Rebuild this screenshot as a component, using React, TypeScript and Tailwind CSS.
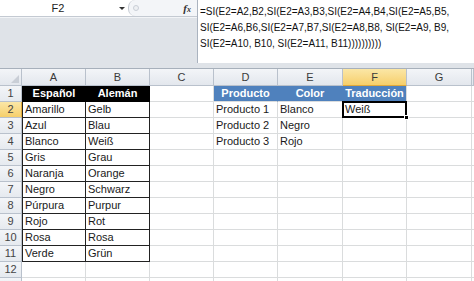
import React from 'react';

const cols = ['A', 'B', 'C', 'D', 'E', 'F', 'G', ''];
const widths = ['w-[64px]', 'w-[64px]', 'w-[64px]', 'w-[64px]', 'w-[65px]', 'w-[64px]', 'w-[65px]', 'flex-1'];

const colores: [string, string][] = [
  ['Amarillo', 'Gelb'],
  ['Azul', 'Blau'],
  ['Blanco', 'Weiß'],
  ['Gris', 'Grau'],
  ['Naranja', 'Orange'],
  ['Negro', 'Schwarz'],
  ['Púrpura', 'Purpur'],
  ['Rojo', 'Rot'],
  ['Rosa', 'Rosa'],
  ['Verde', 'Grün'],
];

const productos: [string, string][] = [
  ['Producto 1', 'Blanco'],
  ['Producto 2', 'Negro'],
  ['Producto 3', 'Rojo'],
];

function Cell({ w, children, className = '' }: { w: string; children?: React.ReactNode; className?: string }) {
  return (
    <div className={`${w} h-full shrink-0 border-r border-b border-[#dadcdd] px-[2px] flex items-center whitespace-nowrap overflow-hidden ${className}`}>
      {children}
    </div>
  );
}

export default function App() {
  const rows = Array.from({ length: 13 }, (_, i) => i + 1);

  return (
    <div className="w-[474px] h-[281px] overflow-hidden bg-white text-[11px] text-[#1a1a1a] font-['Liberation_Sans',Arial,sans-serif]">
      {/* Formula bar */}
      <div className="flex h-[63px]">
        <div className="w-[197px] flex flex-col bg-[#dfe3e8]">
          <div className="h-[17px] flex bg-white border-b border-[#c4cad2]">
            <div className="w-[116px] flex items-center justify-center text-[#222]">F2</div>
            <div className="w-[12px] flex items-center justify-center">
              <span className="border-l-[3px] border-r-[3px] border-t-[3px] border-l-transparent border-r-transparent border-t-[#333]" />
            </div>
            <div className="flex-1 flex items-center bg-[#f3f5f8] border-l border-[#c4cad2] rounded-l-[7px] pl-[4px]">
              <span className="w-[6px] h-[6px] rounded-full border border-[#c9ced6] bg-[#eef0f3]" />
              <span className="ml-auto mr-[6px] italic font-bold text-[11px] text-[#333] font-['Liberation_Serif',serif]">
                f<span className="text-[8px]">x</span>
              </span>
            </div>
          </div>
          <div className="flex-1 border-t border-[#f2f4f7]" />
        </div>
        <div className="flex-1 bg-white border-l border-[#aab3bf] pl-[2px] pt-[4px] text-[10px] leading-[16px] text-[#111]">
          <div>=SI(E2=A2,B2,SI(E2=A3,B3,SI(E2=A4,B4,SI(E2=A5,B5,</div>
          <div>SI(E2=A6,B6,SI(E2=A7,B7,SI(E2=A8,B8, SI(E2=A9, B9,</div>
          <div>SI(E2=A10, B10, SI(E2=A11, B11))))))))))</div>
        </div>
      </div>
      <div className="h-[6px] bg-[#dfe3e8] border-b border-[#a7b0bb]" />

      {/* Column headers */}
      <div className="flex h-[17px] bg-[#eceff3] text-[#3a3a3a]">
        <div className="w-[22px] shrink-0 border-r border-b border-[#b9c1cc] bg-gradient-to-b from-[#f3f5f8] to-[#e3e7ed] flex items-end justify-end p-[2px]">
          <span className="w-0 h-0 border-l-[8px] border-b-[8px] border-l-transparent border-b-[#c9ced6]" />
        </div>
        {cols.map((c, i) => (
          <div
            key={i}
            className={`${widths[i]} shrink-0 border-r border-b border-[#b9c1cc] flex items-center justify-center ${c === 'F' ? 'bg-gradient-to-b from-[#fbe7a6] to-[#f6cf6a] border-b-[#e1a93a]' : 'bg-gradient-to-b from-[#f3f5f8] to-[#e3e7ed]'}`}
          >
            {c}
          </div>
        ))}
      </div>

      {/* Rows */}
      {rows.map((r) => {
        const color = r >= 2 && r <= 11 ? colores[r - 2] : null;
        const prod = r >= 2 && r <= 4 ? productos[r - 2] : null;
        return (
          <div key={r} className="flex h-[16px]">
            <div
              className={`w-[22px] shrink-0 border-r border-b border-[#b9c1cc] flex items-center justify-center text-[#444] ${r === 2 ? 'bg-gradient-to-b from-[#fbe7a6] to-[#f6cf6a] border-r-[#e1a93a]' : 'bg-gradient-to-b from-[#f3f5f8] to-[#e6eaef]'}`}
            >
              {r <= 12 ? r : ''}
            </div>
            {/* A */}
            {r === 1 ? (
              <Cell w="w-[64px]" className="bg-black text-white font-bold justify-center border-l border-l-black border-r-black border-b-black">Español</Cell>
            ) : color ? (
              <Cell w="w-[64px]" className="border-l border-l-[#222] border-r-[#222] border-b-[#222]">{color[0]}</Cell>
            ) : (
              <Cell w="w-[64px]" />
            )}
            {/* B */}
            {r === 1 ? (
              <Cell w="w-[64px]" className="bg-black text-white font-bold justify-center border-r-black border-b-black">Alemán</Cell>
            ) : color ? (
              <Cell w="w-[64px]" className="border-r-[#222] border-b-[#222]">{color[1]}</Cell>
            ) : (
              <Cell w="w-[64px]" />
            )}
            {/* C */}
            <Cell w="w-[64px]" />
            {/* D, E, F */}
            {r === 1 ? (
              <>
                <Cell w="w-[64px]" className="bg-[#4f81bd] text-white font-bold justify-center border-r-[#4f81bd] border-b-[#dadcdd]">Producto</Cell>
                <Cell w="w-[65px]" className="bg-[#4f81bd] text-white font-bold justify-center border-r-[#4f81bd] border-b-[#dadcdd]">Color</Cell>
                <Cell w="w-[64px]" className="bg-[#4f81bd] text-white font-bold justify-center border-b-[#dadcdd]">Traducción</Cell>
              </>
            ) : prod ? (
              <>
                <Cell w="w-[64px]">{prod[0]}</Cell>
                <Cell w="w-[65px]">{prod[1]}</Cell>
                {r === 2 ? (
                  <div className="w-[64px] h-full shrink-0 border-r border-b border-[#dadcdd] relative">
                    <div className="absolute -top-px -left-px right-[-1px] bottom-[-1px] border-2 border-black px-[1px] flex items-center">
                      Weiß
                    </div>
                    <span className="absolute right-[-3px] bottom-[-3px] w-[5px] h-[5px] bg-black border border-white" />
                  </div>
                ) : (
                  <Cell w="w-[64px]" />
                )}
              </>
            ) : (
              <>
                <Cell w="w-[64px]" />
                <Cell w="w-[65px]" />
                <Cell w="w-[64px]" />
              </>
            )}
            <Cell w="w-[65px]" />
            <Cell w="flex-1" />
          </div>
        );
      })}
    </div>
  );
}
